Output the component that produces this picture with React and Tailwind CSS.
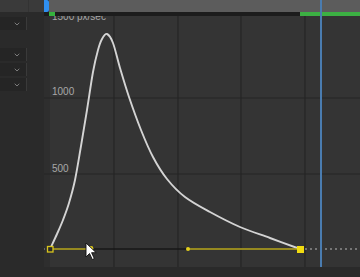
import React from 'react';
import { ChevronDown } from 'lucide-react';

const curve = [
  [51, 247], [57, 234], [63, 220], [69, 203], [75, 180], [81, 146], [87, 110], [93, 72],
  [98, 50], [102, 39], [107, 34],
  [113, 43], [120, 68], [129, 97], [141, 130], [153, 157], [167, 179], [185, 197],
  [210, 212], [240, 227], [270, 238], [300, 249],
];

// catmull-rom -> cubic bezier so the curve has no kinks
const smooth = (pts) => {
  let d = `M${pts[0][0]},${pts[0][1]}`;
  for (let i = 0; i < pts.length - 1; i++) {
    const p0 = pts[i - 1] || pts[i];
    const p1 = pts[i];
    const p2 = pts[i + 1];
    const p3 = pts[i + 2] || p2;
    const c1 = [p1[0] + (p2[0] - p0[0]) / 6, p1[1] + (p2[1] - p0[1]) / 6];
    const c2 = [p2[0] - (p3[0] - p1[0]) / 6, p2[1] - (p3[1] - p1[1]) / 6];
    d += ` C${c1[0].toFixed(2)},${c1[1].toFixed(2)} ${c2[0].toFixed(2)},${c2[1].toFixed(2)} ${p2[0]},${p2[1]}`;
  }
  return d;
};

const Dropdown = () => (
  <div className="h-[13px] w-[27px] bg-[#252525] border-r border-[#3a3a3a] flex items-center justify-end pr-[5px]">
    <ChevronDown size={8} strokeWidth={2.5} className="text-[#8d8d8d]" />
  </div>
);

const Graph = () => (
  <svg width="316" height="261" viewBox="44 16 316 261" className="block">
    <rect x="44" y="16" width="6" height="251" fill="#2e2e2e" />
    <rect x="50" y="16" width="310" height="251" fill="#343434" />
    {[114, 178, 241, 305].map((x) => (
      <line key={x} x1={x} y1="16" x2={x} y2="267" stroke="#252525" strokeWidth="1.2" />
    ))}
    {[98, 174].map((y) => (
      <line key={y} x1="43" y1={y} x2="360" y2={y} stroke="#252525" strokeWidth="1.2" />
    ))}
    <g fontFamily="'Liberation Sans', Arial, sans-serif" fontSize="10" fill="#a8a8a8">
      <text x="52" y="20">1500 px/sec</text>
      <text x="52" y="95">1000</text>
      <text x="52" y="172">500</text>
    </g>
    <line x1="50" y1="249" x2="300" y2="249" stroke="#171717" strokeWidth="1.6" />
    <line x1="305" y1="249" x2="360" y2="249" stroke="#8c8c8c" strokeWidth="1.4" strokeDasharray="2 3" />
    <circle cx="44" cy="249" r="1" fill="#7a7a7a" />
    <path
      d={smooth(curve)}
      fill="none"
      stroke="#d4d4d4"
      strokeWidth="1.9"
      strokeLinecap="round"
    />
    <line x1="53" y1="249" x2="91" y2="249" stroke="#bfae22" strokeWidth="1.4" />
    <line x1="188" y1="249" x2="300" y2="249" stroke="#bfae22" strokeWidth="1.4" />
    <circle cx="91" cy="248.5" r="2.4" fill="#e3cf1c" />
    <circle cx="188" cy="249" r="2" fill="#e3cf1c" />
    <rect x="47.5" y="246.5" width="5.5" height="5.5" fill="#2a2a2a" stroke="#d9c51c" strokeWidth="1.3" />
    <rect x="297" y="246" width="7" height="7" fill="#f2dc10" />
    <path
      d="M86 243 L86 257 L89.5 253.5 L92.3 259.5 L94.3 258.6 L91.6 252.7 L96.2 252.7 Z"
      fill="#ffffff"
      stroke="#111111"
      strokeWidth="0.9"
      strokeLinejoin="round"
    />
  </svg>
);

export default function App() {
  return (
    <div className="relative w-[360px] h-[277px] bg-[#2a2a2a] overflow-hidden flex flex-col">
      <div className="h-[12px] flex shrink-0">
        <div className="w-[44px] bg-[#3a3a3a] flex">
          <div className="w-[29px] border-r border-[#333333]" />
        </div>
        <div className="w-[5px] bg-[#2f8ff0] rounded-r-[2px]" />
        <div className="flex-1 bg-[#5c5c5c]" />
      </div>
      <div className="flex flex-1">
        <div className="w-[44px] flex flex-col pt-[5px]">
          <Dropdown />
          <div className="mt-[18px] flex flex-col gap-[2px]">
            <Dropdown />
            <Dropdown />
            <Dropdown />
          </div>
        </div>
        <div className="flex-1 flex flex-col">
          <div className="h-[4px] bg-[#1c1c1c] flex">
            <div className="ml-[5px] w-[6px] bg-[#35b23d]" />
            <div className="flex-1" />
            <div className="w-[60px] bg-[#3cb043]" />
          </div>
          <Graph />
        </div>
      </div>
      <div className="absolute left-[320px] top-0 w-[2px] h-[267px] bg-[#4a7cb0]" />
    </div>
  );
}
